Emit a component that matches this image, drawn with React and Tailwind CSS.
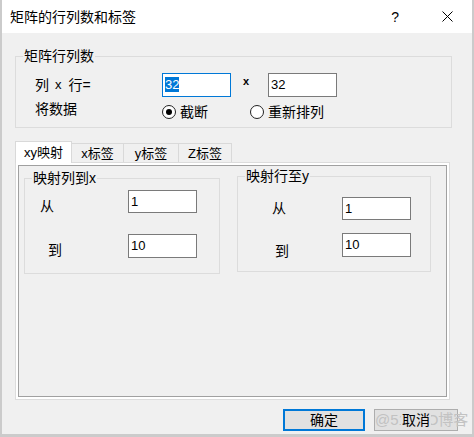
const font = "font-['Liberation_Sans','Noto_Sans_CJK_SC',sans-serif]";

function Field({ w = "w-[69px]", h = "h-[23px]", focused, children }) {
  return (
    <div
      className={`${w} ${h} shrink-0 bg-white border text-[13px] leading-[16px] pl-[2px] pt-[3px] ${
        focused ? "border-[#0078d7]" : "border-[#7a7a7a]"
      }`}
    >
      {children}
    </div>
  );
}

function Radio({ checked }) {
  return (
    <span className="w-[14px] h-[14px] shrink-0 rounded-full border border-[#222] bg-white flex items-center justify-center">
      {checked && <span className="w-[6px] h-[6px] rounded-full bg-black" />}
    </span>
  );
}

function Group({ title, className = "", children }) {
  return (
    <fieldset className={`border border-[#dcdcdc] ${className}`}>
      <legend className="ml-[7px] px-[1px] text-[14px] leading-[16px]">{title}</legend>
      {children}
    </fieldset>
  );
}

const tabs = [
  { label: "xy映射", w: "w-[57px]", active: true },
  { label: "x标签", w: "w-[52px]" },
  { label: "y标签", w: "w-[55px]" },
  { label: "Z标签", w: "w-[53px]" },
];

export default function App() {
  return (
    <div className={`${font} w-[474px] h-[437px] bg-[#f0f0f0] border-x-2 border-b-[3px] border-[#cbcbcb] text-black flex flex-col overflow-hidden`}>
      {/* title bar */}
      <div className="h-[33px] shrink-0 bg-white flex items-center pl-[8px]">
        <span className="text-[14px] leading-none">矩阵的行列数和标签</span>
        <span className="ml-auto text-[14px] leading-none">?</span>
        <svg className="ml-[43px] mr-[19px]" width="11" height="11" viewBox="0 0 11 11">
          <path d="M0.5 0.5 L10.5 10.5 M10.5 0.5 L0.5 10.5" stroke="#000" strokeWidth="1" />
        </svg>
      </div>

      <div className="flex flex-col pl-[13px]">
        {/* matrix size */}
        <Group title="矩阵行列数" className="mt-[15px] w-[437px] pb-[7px]">
          <div className="mt-[9px] flex items-center h-[24px]">
            <span className="w-[146px] pl-[19px] text-[14px] leading-[16px] shrink-0 flex items-center">
              <span>列</span>
              <span className="ml-[6px] mr-[7px] text-[13px]">x</span>
              <span>行=</span>
            </span>
            <Field h="h-[24px]" focused>
              <span className="bg-[#0078d7] text-white">32</span>
            </Field>
            <span className="ml-[12px] w-[8px] self-start mt-[3px] text-[11px] font-bold leading-none">x</span>
            <div className="ml-[17px]">
              <Field h="h-[24px]">32</Field>
            </div>
          </div>
          <div className="mt-[7px] flex items-center h-[16px] text-[14px] leading-[16px]">
            <span className="w-[146px] pl-[19px] shrink-0 mb-[6px]">将数据</span>
            <div className="w-[88px] flex items-center shrink-0">
              <Radio checked />
              <span className="ml-[4px]">截断</span>
            </div>
            <Radio />
            <span className="ml-[4px]">重新排列</span>
          </div>
        </Group>

        {/* tabs */}
        <div className="mt-[13px] flex items-end">
          {tabs.map((t) =>
            t.active ? (
              <div
                key={t.label}
                className={`${t.w} h-[22px] -mb-px relative z-10 bg-white border-x border-t border-[#d9d9d9] flex items-center justify-center text-[13px] leading-none`}
              >
                {t.label}
              </div>
            ) : (
              <div
                key={t.label}
                className={`${t.w} h-[19px] bg-[#f0f0f0] border-t border-r border-[#d9d9d9] flex items-center justify-center text-[13px] leading-none`}
              >
                {t.label}
              </div>
            )
          )}
        </div>
        <div className="w-[435px] h-[238px] border border-[#dcdcdc] bg-white p-[2px] flex">
          <div className="flex-1 border border-[#a0a0a0] bg-[#f0f0f0] flex items-start pl-[5px] text-[14px] leading-[16px]">
            <Group title="映射列到x" className="mt-[4px] w-[196px] pb-[15px]">
              <div className="mt-[4px] flex items-start">
                <span className="ml-[15px] w-[88px] mt-[8px] shrink-0">从</span>
                <Field>1</Field>
              </div>
              <div className="mt-[20px] flex items-start">
                <span className="ml-[23px] w-[80px] mt-[8px] shrink-0">到</span>
                <Field h="h-[24px]">10</Field>
              </div>
            </Group>
            <Group title="映射行至y" className="mt-[2px] ml-[17px] w-[194px] pb-[12px]">
              <div className="mt-[13px] flex items-start">
                <span className="ml-[34px] w-[70px] mt-[3px] shrink-0">从</span>
                <Field>1</Field>
              </div>
              <div className="mt-[13px] flex items-start">
                <span className="ml-[37px] w-[67px] mt-[10px] shrink-0">到</span>
                <Field h="h-[24px]">10</Field>
              </div>
            </Group>
          </div>
        </div>

        {/* buttons */}
        <div className="mt-[9px] flex justify-end gap-[9px] pr-[14px]">
          <button className="w-[82px] h-[22px] bg-[#e1e1e1] border-2 border-[#0078d7] text-[14px] leading-none flex items-center justify-center">
            确定
          </button>
          <button className="relative w-[84px] h-[22px] bg-[#e1e1e1] border border-[#adadad] text-[14px] leading-none flex items-center justify-center">
            <span className="absolute left-[0px] top-[1px] whitespace-nowrap text-[15px] leading-[18px] text-[#c2c2c2]">
              @51CTO博客
            </span>
            <span className="relative bg-[#e1e1e1] px-[1px] py-[2px]">取消</span>
          </button>
        </div>
      </div>
    </div>
  );
}
